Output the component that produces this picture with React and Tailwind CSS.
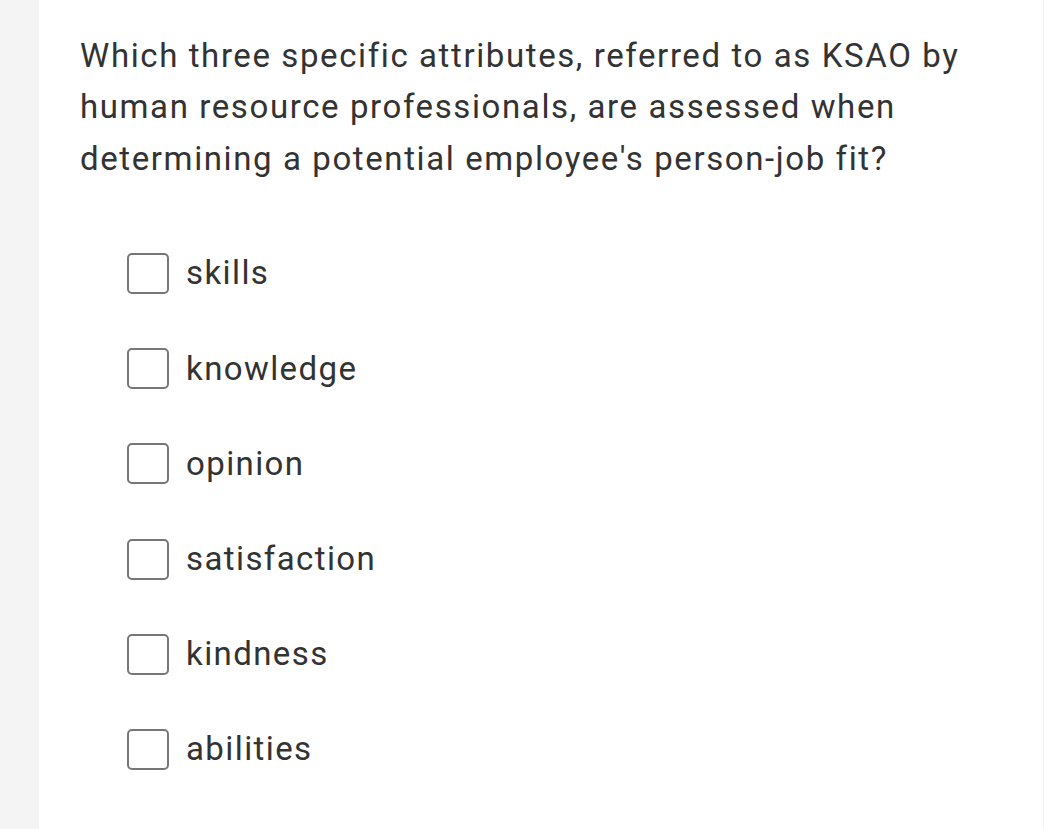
import React from "react";

const options = ["skills", "knowledge", "opinion", "satisfaction", "kindness", "abilities"];

export default function App() {
  return (
    <div className="flex min-h-[829px] w-full bg-white" style={{ fontFamily: "Roboto, 'Noto Sans', sans-serif" }}>
      <div className="w-[39px] shrink-0 bg-[#f4f4f4]" />
      <div className="flex-1 flex flex-col pl-[41px] pt-[30px] text-[#333333]">
        <p className="text-[33px] leading-[51.3px] tracking-[1.6px] pr-[40px]">
          Which three specific attributes, referred to as KSAO by human resource professionals, are assessed when determining a potential employee's person-job fit?
        </p>
        <div className="flex flex-col mt-[42px] pl-[47px]">
          {options.map((o) => (
            <div key={o} className="flex items-center h-[95.2px]">
              <div className="w-[42px] h-[41px] border-2 border-[#777777] rounded-[5px] shrink-0" />
              <span className="ml-[17px] text-[33px] leading-[40px] tracking-[1.4px]">{o}</span>
            </div>
          ))}
        </div>
      </div>
      <div className="w-px shrink-0 bg-[#efefef]" />
    </div>
  );
}
